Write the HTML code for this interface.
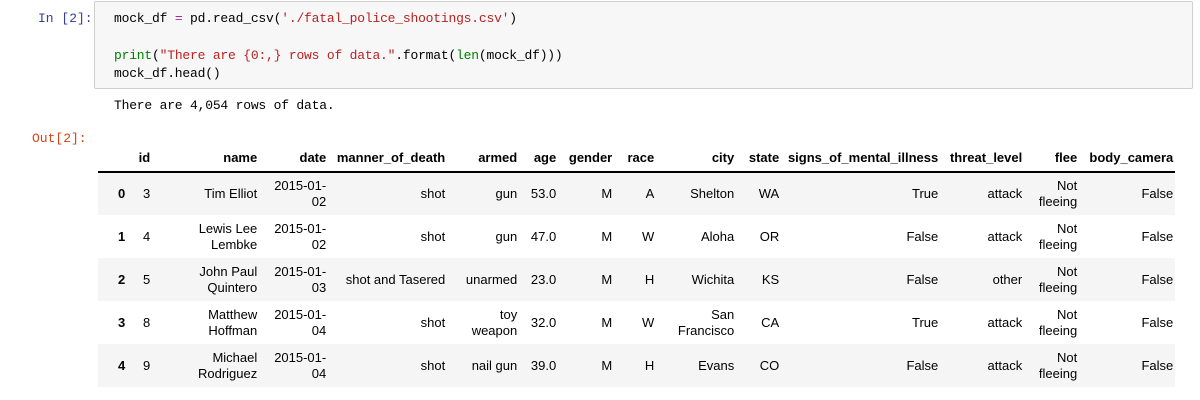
<!DOCTYPE html>
<html><head><meta charset="utf-8"><style>
body{margin:0;width:1200px;height:400px;background:#fff;position:relative;overflow:hidden;font-family:"Liberation Sans",Arial,sans-serif}
.mono{font-family:"Liberation Mono",monospace;font-size:13px}
.p{position:absolute;white-space:pre}
.box{position:absolute;left:94px;top:1px;width:1097px;height:86px;background:#f7f7f7;border:1px solid #cfcfcf;border-radius:2px}
table{position:absolute;left:98px;top:145px;border-collapse:collapse;table-layout:fixed;font-size:13px;color:#000}
td,th{text-align:right;padding:0;line-height:16px}
th{height:26px;font-weight:bold;vertical-align:middle}
thead tr{border-bottom:2px solid #000}
tbody tr{height:43px}
tbody tr:nth-child(odd){background:#f5f5f5}
tbody th{text-align:left;padding-left:20px}
</style></head><body>
<div class="p mono" style="left:38px;top:11px;color:#303f9f">In [2]:</div>
<div class="box"></div>
<div class="p mono" style="left:114px;top:11px;color:#000;letter-spacing:-0.2px">mock_df <span style="color:#a626a4">=</span> pd.read_csv(<span style="color:#ba2121">'./fatal_police_shootings.csv'</span>)</div>
<div class="p mono" style="left:114px;top:48px;color:#000;letter-spacing:-0.2px"><span style="color:#008000">print</span>(<span style="color:#ba2121">"There are {0:,} rows of data."</span>.format(<span style="color:#008000">len</span>(mock_df)))</div>
<div class="p mono" style="left:114px;top:66px;color:#000;letter-spacing:-0.2px">mock_df.head()</div>
<div class="p mono" style="left:114px;top:98px;color:#000;letter-spacing:-0.2px">There are 4,054 rows of data.</div>
<div class="p mono" style="left:32px;top:131px;color:#d84315">Out[2]:</div>
<table>
<colgroup><col style="width:27px"><col style="width:25px"><col style="width:107px"><col style="width:69px"><col style="width:119px"><col style="width:72px"><col style="width:39px"><col style="width:56px"><col style="width:42px"><col style="width:80px"><col style="width:45px"><col style="width:159px"><col style="width:84px"><col style="width:55px"><col style="width:96px"><col style="width:2px"></colgroup>
<thead><tr><th></th><th>id</th><th>name</th><th>date</th><th>manner_of_death</th><th>armed</th><th>age</th><th>gender</th><th>race</th><th>city</th><th>state</th><th>signs_of_mental_illness</th><th>threat_level</th><th>flee</th><th>body_camera</th><th></th></tr></thead>
<tbody>
<tr><th>0</th><td>3</td><td>Tim Elliot</td><td>2015-01-<br>02</td><td>shot</td><td>gun</td><td>53.0</td><td>M</td><td>A</td><td>Shelton</td><td>WA</td><td>True</td><td>attack</td><td>Not<br>fleeing</td><td>False</td><td></td></tr>
<tr><th>1</th><td>4</td><td>Lewis Lee<br>Lembke</td><td>2015-01-<br>02</td><td>shot</td><td>gun</td><td>47.0</td><td>M</td><td>W</td><td>Aloha</td><td>OR</td><td>False</td><td>attack</td><td>Not<br>fleeing</td><td>False</td><td></td></tr>
<tr><th>2</th><td>5</td><td>John Paul<br>Quintero</td><td>2015-01-<br>03</td><td>shot and Tasered</td><td>unarmed</td><td>23.0</td><td>M</td><td>H</td><td>Wichita</td><td>KS</td><td>False</td><td>other</td><td>Not<br>fleeing</td><td>False</td><td></td></tr>
<tr><th>3</th><td>8</td><td>Matthew<br>Hoffman</td><td>2015-01-<br>04</td><td>shot</td><td>toy<br>weapon</td><td>32.0</td><td>M</td><td>W</td><td>San<br>Francisco</td><td>CA</td><td>True</td><td>attack</td><td>Not<br>fleeing</td><td>False</td><td></td></tr>
<tr><th>4</th><td>9</td><td>Michael<br>Rodriguez</td><td>2015-01-<br>04</td><td>shot</td><td>nail gun</td><td>39.0</td><td>M</td><td>H</td><td>Evans</td><td>CO</td><td>False</td><td>attack</td><td>Not<br>fleeing</td><td>False</td><td></td></tr>
</tbody></table>
</body></html>
